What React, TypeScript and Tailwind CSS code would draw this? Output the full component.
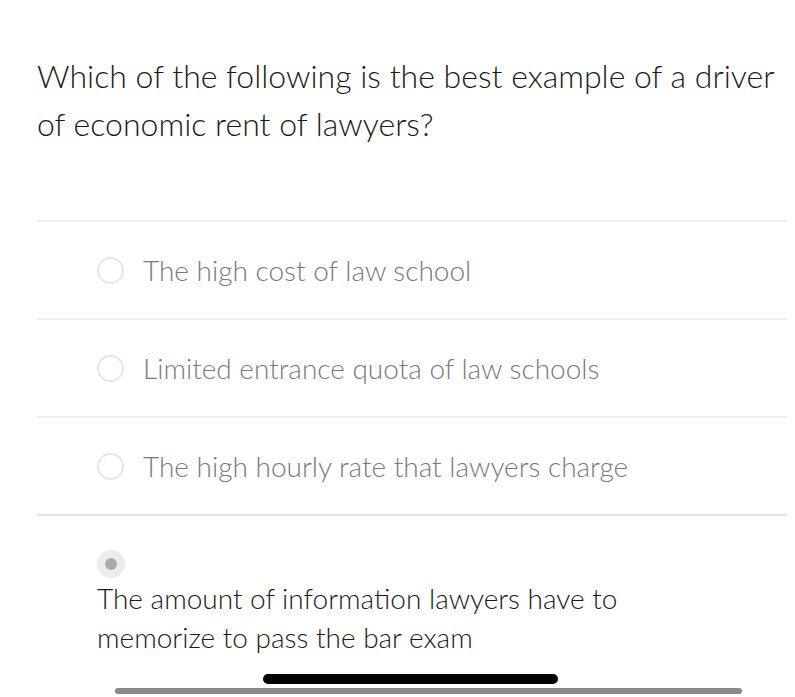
const options = [
  'The high cost of law school',
  'Limited entrance quota of law schools',
  'The high hourly rate that lawyers charge',
];

function Radio({ checked = false }: { checked?: boolean }) {
  if (checked) {
    return (
      <span className="flex h-[28px] w-[28px] items-center justify-center rounded-full bg-[#ececec]">
        <span className="h-[12px] w-[12px] rounded-full bg-[#aaaaaa]" />
      </span>
    );
  }
  return <span className="block h-[27px] w-[27px] shrink-0 rounded-full border-2 border-[#e6e6e6]" />;
}

export default function App() {
  return (
    <div
      className="relative h-[697px] w-[795px] overflow-hidden bg-white"
      style={{ fontFamily: 'Lato, "Open Sans", sans-serif' }}
    >
      <div className="pl-[37px] pr-[8px] pt-[52px]">
        <h1 className="pr-[10px] text-[32px] leading-[48px] font-light text-[#1a1a1a]">
          Which of the following is the best example of a driver of economic rent of lawyers?
        </h1>

        <div className="mt-[72px]">
          {options.map((opt) => (
            <div key={opt} className="flex h-[98px] items-center border-t-2 border-[#f0f0f0] pl-[60px]">
              <Radio />
              <span className="ml-[19px] text-[28px] font-light text-[#7a7a7a]">{opt}</span>
            </div>
          ))}
          <div className="border-t-2 border-[#e2e2e2] pl-[60px] pt-[34px]">
            <Radio checked />
            <p className="mt-[1px] text-[28px] leading-[39px] font-light text-[#1a1a1a]">
              The amount of information lawyers have to
              <br />
              memorize to pass the bar exam
            </p>
          </div>
        </div>
      </div>

      <div className="absolute left-[263px] top-[674px] h-[10px] w-[295px] rounded-full bg-black" />
      <div className="absolute left-[115px] top-[688px] h-[6px] w-[627px] rounded-full bg-[#8a8a8a]" />
    </div>
  );
}
